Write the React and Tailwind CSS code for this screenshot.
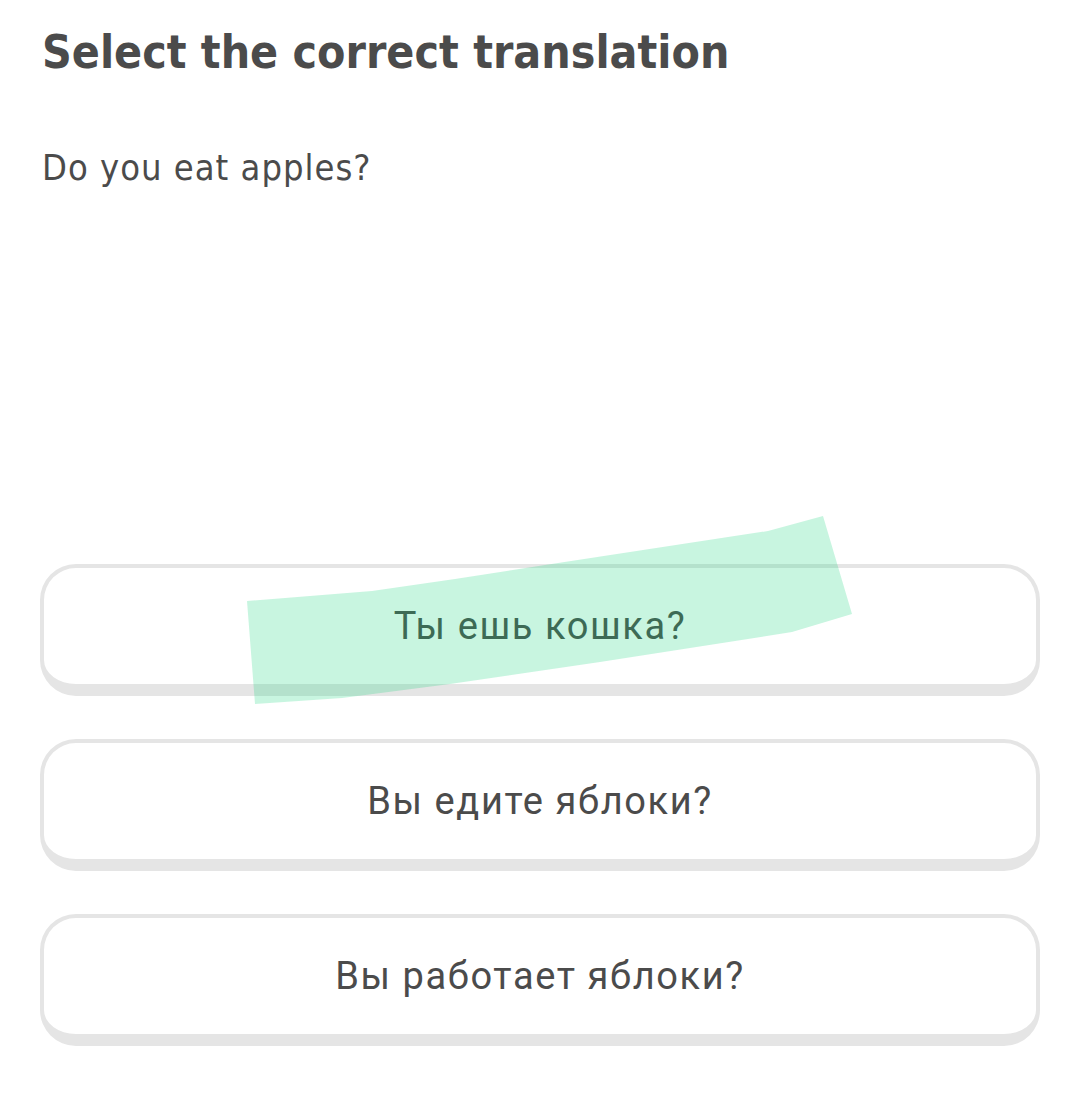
const options = ["Ты ешь кошка?", "Вы едите яблоки?", "Вы работает яблоки?"];

// marker stroke drawn over the first answer
const markerPoints =
  "247,601 372,591 455,579 545,565 768,531 823,516 852,614 792,632 600,662 450,684 342,698 255,704";

function OptionButton({ label }) {
  return (
    <button
      className="w-full h-[132px] rounded-[36px] border-[4px] border-b-[12px] border-[#e5e5e5] bg-white flex items-center justify-center text-[38px] tracking-[1.6px] text-[#4b4b4b]"
      style={{ fontFamily: "Roboto, 'Noto Sans', sans-serif" }}
    >
      {label}
    </button>
  );
}

export default function App() {
  return (
    <div className="relative w-[1080px] h-[1095px] bg-white overflow-hidden">
      <div className="px-[40px] pt-[24px]">
        <h1
          className="text-[46px] leading-[56px] font-bold text-[#4b4b4b] pl-[2px]"
          style={{ fontFamily: "'DejaVu Sans Condensed', 'DejaVu Sans', sans-serif" }}
        >
          Select the correct translation
        </h1>
        <p
          className="mt-[66px] text-[36px] leading-[44px] tracking-[1px] text-[#4b4b4b] pl-[2px]"
          style={{ fontFamily: "'DejaVu Sans Condensed', 'DejaVu Sans', sans-serif" }}
        >
          Do you eat apples?
        </p>
        <div className="mt-[374px] flex flex-col gap-[43px]">
          {options.map((o) => (
            <OptionButton key={o} label={o} />
          ))}
        </div>
      </div>
      <svg
        className="absolute inset-0 pointer-events-none"
        width="1080"
        height="1095"
        viewBox="0 0 1080 1095"
      >
        <polygon points={markerPoints} fill="rgb(17,213,122)" fillOpacity="0.23" />
      </svg>
    </div>
  );
}
